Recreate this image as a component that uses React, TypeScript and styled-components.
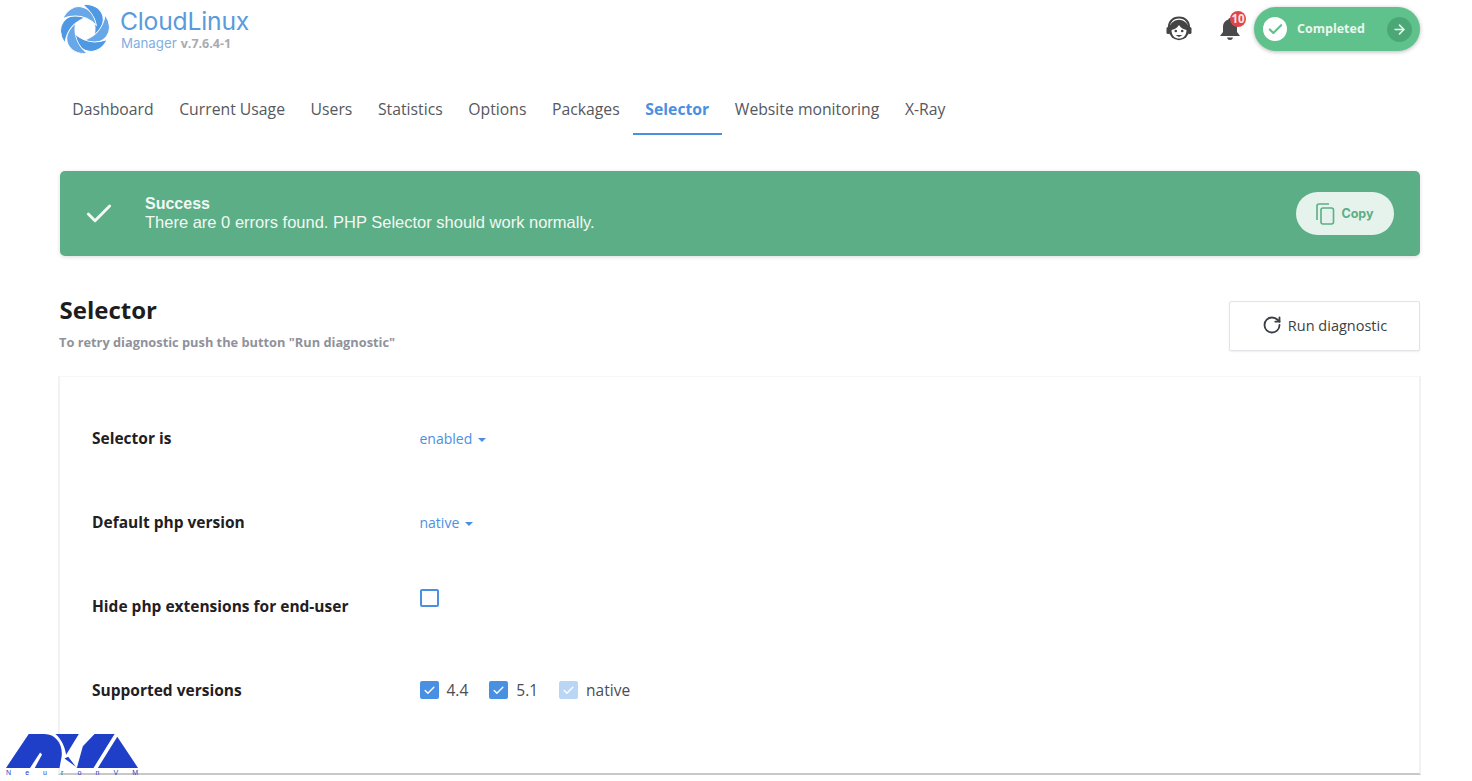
import React from 'react';
import styled, { createGlobalStyle } from 'styled-components';
import { RotateCw, ArrowRight, Check } from 'lucide-react';

const GlobalStyle = createGlobalStyle`
  html, body {
    margin: 0;
    height: 100%;
    background: #fff;
    overflow: hidden;
  }
  body {
    font-family: "Open Sans", "Liberation Sans", sans-serif;
    color: #2b2b2b;
  }
`;

const Page = styled.div`
  width: 1472px;
  height: 781px;
  box-sizing: border-box;
  padding: 0 52px 6px 60px;
  display: flex;
  flex-direction: column;
  position: relative;
  overflow: hidden;
`;

const Header = styled.header`
  height: 58px;
  display: flex;
  align-items: flex-start;
  justify-content: space-between;
  padding-top: 4px;
  box-sizing: border-box;
`;

const Brand = styled.div`
  display: flex;
  align-items: center;
  gap: 10px;
`;

const BrandText = styled.div`
  display: flex;
  flex-direction: column;
`;

const BrandName = styled.span`
  font-family: "Inter", "Liberation Sans", sans-serif;
  font-size: 24.7px;
  line-height: 28px;
  color: #5a9bdc;
  letter-spacing: -0.2px;
`;

const BrandSub = styled.span`
  font-family: "Inter", "Liberation Sans", sans-serif;
  font-size: 13.3px;
  line-height: 16px;
  color: #7fb0e2;
  margin-left: 1px;
`;

const Version = styled.span`
  color: #a9abb0;
  font-family: "Open Sans", sans-serif;
  font-weight: 700;
  font-size: 12.5px;
  margin-left: 4px;
`;

const HeaderActions = styled.div`
  display: flex;
  align-items: center;
  height: 50px;
`;

const IconSlot = styled.div<{ $gap: number }>`
  display: flex;
  position: relative;
  margin-right: ${(p) => p.$gap}px;
`;

const Badge = styled.span`
  position: absolute;
  top: -5px;
  left: 12px;
  width: 16px;
  height: 16px;
  border-radius: 50%;
  background: #e0454b;
  color: #f8e4e4;
  font-size: 11.5px;
  font-weight: 700;
  line-height: 16px;
  text-align: center;
`;

const StatusPill = styled.div`
  width: 166px;
  height: 44px;
  border-radius: 22px;
  background: #5fc18c;
  box-shadow: 0 1px 4px rgba(0, 0, 0, 0.28);
  display: flex;
  align-items: center;
  padding: 0 8px 0 9px;
  box-sizing: border-box;
  color: #e9f7ef;
  font-size: 12.5px;
  font-weight: 700;
`;

const StatusCheck = styled.span`
  width: 24px;
  height: 24px;
  border-radius: 50%;
  background: #fff;
  color: #5fc18c;
  display: flex;
  align-items: center;
  justify-content: center;
  margin-right: 10px;
`;

const StatusLabel = styled.span`
  flex: 1;
  padding-bottom: 2px;
`;

const StatusArrow = styled.span`
  width: 25px;
  height: 25px;
  border-radius: 50%;
  background: #4ba876;
  color: #e9f7ef;
  display: flex;
  align-items: center;
  justify-content: center;
`;

const Tabs = styled.nav`
  display: flex;
  height: 49px;
  margin-top: 28px;
  margin-left: -0.5px;
`;

const Tab = styled.a<{ $active?: boolean }>`
  padding: 0 12.8px;
  display: flex;
  align-items: center;
  box-sizing: border-box;
  font-size: 15.75px;
  white-space: nowrap;
  padding-bottom: 2px;
  color: ${(p) => (p.$active ? '#4a90e2' : '#55585e')};
  font-weight: ${(p) => (p.$active ? 700 : 400)};
  border-bottom: 2px solid ${(p) => (p.$active ? '#4a90e2' : 'transparent')};
`;

const Banner = styled.section`
  margin-top: 36px;
  height: 85px;
  background: #5cae86;
  border-radius: 5px;
  box-shadow: 0 1px 4px rgba(0, 0, 0, 0.14);
  display: flex;
  align-items: center;
  padding: 0 26px 0 23px;
  color: #f2f8f4;
`;

const BannerText = styled.div`
  flex: 1;
  margin-left: 30px;
  padding-bottom: 2px;
  font-family: "Liberation Sans", Arial, sans-serif;
  font-size: 16.5px;
  line-height: 19px;
`;

const BannerTitle = styled.div`
  font-size: 16px;
  font-weight: 700;
`;

const CopyButton = styled.button`
  width: 98px;
  height: 43px;
  border: none;
  border-radius: 22px;
  background: #e6f3ec;
  color: #5cae86;
  display: flex;
  align-items: center;
  justify-content: center;
  gap: 6px;
  font-family: "Inter", "Liberation Sans", sans-serif;
  font-size: 12.5px;
  font-weight: 700;
  padding: 0 1px 0 0;
`;

const TitleRow = styled.div`
  margin-top: 45px;
  display: flex;
  justify-content: space-between;
  align-items: flex-start;
`;

const TitleBlock = styled.div`
  display: flex;
  flex-direction: column;
`;

const Title = styled.h1`
  margin: -8px 0 0 -0.5px;
  font-size: 24px;
  line-height: 34px;
  font-weight: 700;
  color: #1d1d1f;
`;

const Subtitle = styled.p`
  margin: 7px 0 0 -1px;
  font-size: 12.8px;
  line-height: 17px;
  font-weight: 700;
  color: #8f929a;
`;

const RunButton = styled.button`
  width: 191px;
  height: 50px;
  background: #fff;
  border: 1px solid #e2e3e6;
  border-radius: 2px;
  box-shadow: 0 1px 2px rgba(0, 0, 0, 0.07);
  display: flex;
  align-items: center;
  justify-content: center;
  gap: 6px;
  font-family: "Open Sans", sans-serif;
  font-size: 14.5px;
  color: #3c3f44;
  padding: 0 0 2px;
`;

const Card = styled.section`
  margin: 25px -1px 0 -2px;
  flex: 1;
  background: #fff;
  border-top: 1px solid #f7f7f8;
  border-left: 2px solid #f2f2f3;
  border-right: 2px solid #f2f2f3;
  border-bottom: 2px solid #c8c8c8;
  padding: 19px 32px 0;
  display: flex;
  flex-direction: column;
`;

const FormRow = styled.div`
  display: grid;
  grid-template-columns: 327.5px 1fr;
  align-items: center;
  height: 84px;
`;

const Label = styled.div`
  font-size: 15.5px;
  font-weight: 700;
  color: #1f2023;
`;

const Dropdown = styled.span`
  display: inline-flex;
  align-items: center;
  gap: 6px;
  font-size: 14px;
  color: #4a90e2;
`;

const Caret = styled.span`
  width: 0;
  height: 0;
  border-left: 4.5px solid transparent;
  border-right: 4.5px solid transparent;
  border-top: 4.5px solid #4a90e2;
  margin-top: 2px;
`;

const Checks = styled.div`
  display: flex;
  align-items: center;
  gap: 21px;
`;

const CheckItem = styled.label`
  display: flex;
  align-items: center;
  gap: 8px;
  font-size: 15.5px;
  color: #4a4d52;
`;

const Box = styled.span<{ $checked?: boolean; $muted?: boolean; $up?: boolean }>`
  width: 19px;
  height: 18px;
  box-sizing: border-box;
  border-radius: 2px;
  display: flex;
  align-items: center;
  justify-content: center;
  color: #fff;
  margin-top: ${(p) => (p.$up ? -16 : 0)}px;
  background: ${(p) => (p.$muted ? '#b9d6f5' : p.$checked ? '#4a90e2' : '#fff')};
  border: 2px solid ${(p) => (p.$muted ? '#b9d6f5' : '#4a90e2')};
`;

const Watermark = styled.div`
  position: absolute;
  left: 6px;
  top: 734px;
  width: 132px;
  display: flex;
  flex-direction: column;
  gap: 2px;
`;

const WatermarkText = styled.div`
  display: flex;
  justify-content: space-between;
  color: #2540c4;
  font-family: "Liberation Sans", sans-serif;
  font-size: 7px;
  line-height: 6px;
`;

const Swirl = () => (
  <svg width="50" height="50" viewBox="0 0 100 100" fill="none" style={{ flex: 'none' }}>
    {[0, 60, 120, 180, 240, 300].map((a, i) => (
      <path
        key={a}
        transform={`rotate(${a} 50 50)`}
        d="M46 1 C84 -2 103 34 68 66 C75 38 64 16 46 1 Z"
        fill={i % 2 === 0 ? '#4f98e4' : '#68a8e8'}
        stroke="#fff"
        strokeWidth="1.8"
      />
    ))}
  </svg>
);

const CopyIcon = () => (
  <svg width="20" height="22" viewBox="0 0 20 22" fill="none" stroke="currentColor" strokeWidth="1.6">
    <path d="M2 17 V3 C2 1.9 2.9 1 4 1 H14" />
    <rect x="6" y="5" width="12.5" height="16" rx="2" />
  </svg>
);

const SupportIcon = () => (
  <svg width="28" height="28" viewBox="0 0 28 28">
    <path d="M3 15 C2 6 7 1.5 14 1.5 C21 1.5 26 6 25 15 L23 15 C24 8 20 3.5 14 3.5 C8 3.5 4 8 5 15 Z" fill="#444" />
    <circle cx="14" cy="15" r="10.2" fill="#444" />
    <rect x="1.5" y="12" width="3.5" height="7" rx="1.5" fill="#444" />
    <rect x="23" y="12" width="3.5" height="7" rx="1.5" fill="#444" />
    <path d="M6.5 15 C10 14.5 12.5 12.5 14 10 C15.5 12.5 18 14.5 21.5 15 C21.5 21 18 23.6 14 23.6 C10 23.6 6.5 21 6.5 15 Z" fill="#fff" />
    <circle cx="10.8" cy="16" r="1.3" fill="#444" />
    <circle cx="17.2" cy="16" r="1.3" fill="#444" />
    <path d="M10.5 20 H17.5 L14 22 Z" fill="#444" />
  </svg>
);

const BellIcon = () => (
  <svg width="24" height="26" viewBox="0 0 24 26">
    <path d="M12 2 C13 2 13.6 2.8 13.6 3.6 C17 4.6 19 7.6 19 11 V16 L22 20 H2 L5 16 V11 C5 7.6 7 4.6 10.4 3.6 C10.4 2.8 11 2 12 2 Z" fill="#4a4a4a" />
    <path d="M9 21.5 H15 C14.6 23.2 13.5 24 12 24 C10.5 24 9.4 23.2 9 21.5 Z" fill="#4a4a4a" />
  </svg>
);

const NeuronLogo = () => (
  <svg width="132" height="34" viewBox="20 42 395 101" style={{ display: 'block' }}>
    <g fill="#1f3fc9">
      <path d="M20 143 L88 42 H135 C172 42 192 78 186 112 L180 143 H106 L128 103 L122 97 L92 143 Z" />
      <path d="M168 42 H238 L200 104 C196 80 186 58 168 42 Z" />
      <path d="M285 42 H345 L282 143 H234 L195 115 L206 110 L232 143 L250 78 Z" />
      <path d="M353 50 L415 143 H295 Z" />
    </g>
  </svg>
);

const tabs = ['Dashboard', 'Current Usage', 'Users', 'Statistics', 'Options', 'Packages', 'Selector', 'Website monitoring', 'X-Ray'];

export default function App() {
  return (
    <Page>
      <GlobalStyle />
      <Header>
        <Brand>
          <Swirl />
          <BrandText>
            <BrandName>CloudLinux</BrandName>
            <BrandSub>
              Manager<Version>v.7.6.4-1</Version>
            </BrandSub>
          </BrandText>
        </Brand>
        <HeaderActions>
          <IconSlot $gap={25}>
            <SupportIcon />
          </IconSlot>
          <IconSlot $gap={12}>
            <BellIcon />
            <Badge>10</Badge>
          </IconSlot>
          <StatusPill>
            <StatusCheck>
              <Check size={17} strokeWidth={3} />
            </StatusCheck>
            <StatusLabel>Completed</StatusLabel>
            <StatusArrow>
              <ArrowRight size={15} strokeWidth={2.5} />
            </StatusArrow>
          </StatusPill>
        </HeaderActions>
      </Header>
      <Tabs>
        {tabs.map((t) => (
          <Tab key={t} $active={t === 'Selector'}>
            {t}
          </Tab>
        ))}
      </Tabs>
      <Banner>
        <Check size={32} strokeWidth={2.2} />
        <BannerText>
          <BannerTitle>Success</BannerTitle>
          There are 0 errors found. PHP Selector should work normally.
        </BannerText>
        <CopyButton>
          <CopyIcon />
          Copy
        </CopyButton>
      </Banner>
      <TitleRow>
        <TitleBlock>
          <Title>Selector</Title>
          <Subtitle>To retry diagnostic push the button "Run diagnostic"</Subtitle>
        </TitleBlock>
        <RunButton>
          <RotateCw size={20} strokeWidth={2.2} />
          Run diagnostic
        </RunButton>
      </TitleRow>
      <Card>
        <FormRow>
          <Label>Selector is</Label>
          <div>
            <Dropdown>
              enabled <Caret />
            </Dropdown>
          </div>
        </FormRow>
        <FormRow>
          <Label>Default php version</Label>
          <div>
            <Dropdown>
              native <Caret />
            </Dropdown>
          </div>
        </FormRow>
        <FormRow>
          <Label>Hide php extensions for end-user</Label>
          <Box $up />
        </FormRow>
        <FormRow>
          <Label>Supported versions</Label>
          <Checks>
            <CheckItem>
              <Box $checked>
                <Check size={13} strokeWidth={2.5} />
              </Box>
              4.4
            </CheckItem>
            <CheckItem>
              <Box $checked>
                <Check size={13} strokeWidth={2.5} />
              </Box>
              5.1
            </CheckItem>
            <CheckItem>
              <Box $muted>
                <Check size={13} strokeWidth={2.5} />
              </Box>
              native
            </CheckItem>
          </Checks>
        </FormRow>
      </Card>
      <Watermark>
        <NeuronLogo />
        <WatermarkText>
          {'NeuronVM'.split('').map((c, i) => (
            <span key={i}>{c}</span>
          ))}
        </WatermarkText>
      </Watermark>
    </Page>
  );
}
